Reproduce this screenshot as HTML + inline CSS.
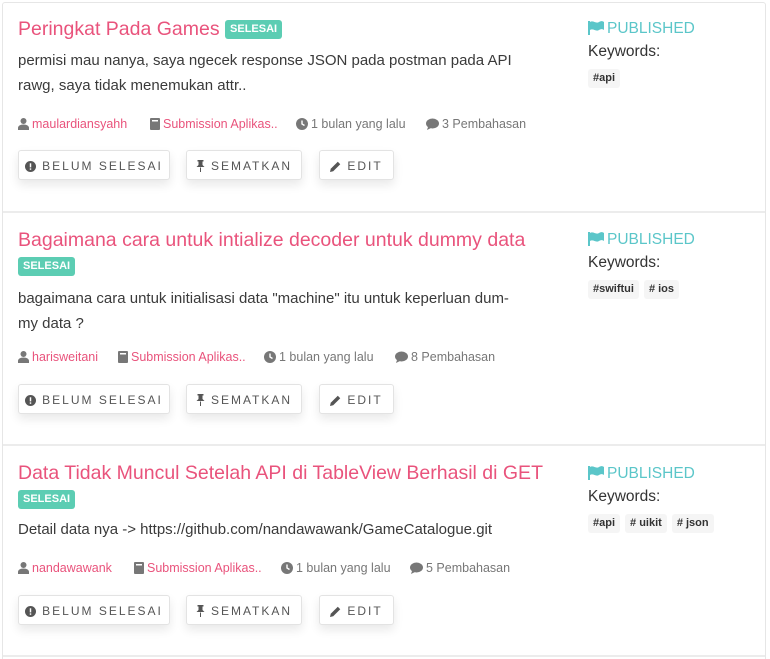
<!DOCTYPE html>
<html><head><meta charset="utf-8"><style>
html,body{margin:0;width:770px;height:659px;overflow:hidden}
body{background:#fff;font-family:"Liberation Sans",sans-serif;position:relative}
.frame{position:absolute;left:2px;top:2px;width:762px;height:657px;border:1px solid #e6e6e6;border-bottom:none;border-radius:3px 3px 0 0}
.sep{position:absolute;left:3px;width:762px;height:2px;background:#ececec}
.a{position:absolute;white-space:nowrap}
.t{font-size:19.5px;color:#e9537c;line-height:22px}
.badge{display:inline-block;background:#5ccdb3;color:#fff;font-weight:bold;font-size:11px;padding:3px 5px;border-radius:3px;line-height:13px;vertical-align:3px}
.d{font-size:15px;color:#3a3a3a;line-height:25px}
.m{font-size:12.5px;color:#777;line-height:14px}
.m span{position:absolute;white-space:nowrap}
.pk{color:#e9537c;font-weight:normal}
.ic{display:inline-block;vertical-align:-2px;margin-right:3px}
.btn{position:absolute;height:30px;border:1px solid #e3e3e3;border-radius:3px;box-shadow:0 5px 10px rgba(0,0,0,.09);font-size:12px;letter-spacing:2px;color:#555;line-height:30px;text-align:center;box-sizing:border-box;background:#fff}
.btn .ic{margin-right:6px}
.pub{font-size:15.5px;color:#5bc6c9}
.kw{font-size:15.5px;color:#333}
.tag{display:inline-block;background:#f5f5f5;font-size:11px;font-weight:bold;color:#333;padding:3px 5px;border-radius:3px;margin-right:5px;line-height:13px}
</style></head><body>
<div class="frame"></div>
<div class="sep" style="top:211px"></div>
<div class="sep" style="top:444px"></div>
<div class="sep" style="top:655px"></div>

<!-- card1 -->
<div class="a t" style="left:18px;top:18px">Peringkat Pada Games <span class="badge">SELESAI</span></div>
<div class="a d" style="left:18px;top:48px">permisi mau nanya, saya ngecek response JSON pada postman pada API<br>rawg, saya tidak menemukan attr..</div>
<div class="a m" style="left:0;top:117px;width:580px">
<span style="left:18px"><svg class="ic" width="11" height="12" viewBox="0 0 11 12"><circle cx="5.5" cy="3" r="3" fill="#777"/><path d="M0 12v-2c0-2 2-3.5 5.5-3.5S11 8 11 10v2z" fill="#777"/></svg><b class="pk">maulardiansyahh</b></span>
<span style="left:150px"><svg class="ic" width="10" height="12" viewBox="0 0 10 12"><rect width="10" height="12" rx="1" fill="#777"/><rect x="2" y="2" width="6" height="1.5" fill="#fff"/></svg><b class="pk">Submission Aplikas..</b></span>
<span style="left:296px"><svg class="ic" width="12" height="12" viewBox="0 0 12 12"><circle cx="6" cy="6" r="6" fill="#777"/><path d="M6 2.5V6l2.5 1.5" stroke="#fff" stroke-width="1.4" fill="none"/></svg>1 bulan yang lalu</span>
<span style="left:426px"><svg class="ic" width="13" height="12" viewBox="0 0 13 12"><ellipse cx="6.5" cy="5.5" rx="6.5" ry="5" fill="#777"/><path d="M2 9l-1 3 4-2z" fill="#777"/></svg>3 Pembahasan</span>
</div>
<div class="btn" style="left:18px;top:150px;width:152px"><svg class="ic" width="11" height="11" viewBox="0 0 12 12"><circle cx="6" cy="6" r="6" fill="#555"/><rect x="5.2" y="2.5" width="1.6" height="4.5" fill="#fff"/><rect x="5.2" y="8" width="1.6" height="1.6" fill="#fff"/></svg>BELUM SELESAI</div>
<div class="btn" style="left:186px;top:150px;width:116px"><svg class="ic" width="9" height="12" viewBox="0 0 9 12"><path d="M1.5 0h6v1.5H6.5v3.5l2 2H.5l2-2V1.5h-1zM4 7.5h1V12H4z" fill="#555"/></svg>SEMATKAN</div>
<div class="btn" style="left:319px;top:150px;width:75px"><svg class="ic" width="11" height="11" viewBox="0 0 12 12"><path d="M0 12l.8-3.5L8.5.8l2.7 2.7-7.7 7.7z" fill="#555"/></svg>EDIT</div>
<div class="a pub" style="left:588px;top:20px"><svg class="ic" width="16" height="14" viewBox="0 0 16 14"><path d="M0 0h2v14H0zM2 1c3-2 6 2 9 0s5 0 5 0v8s-2-2-5 0-6-2-9 0z" fill="#5bc6c9"/></svg>PUBLISHED</div>
<div class="a kw" style="left:588px;top:43px">Keywords:</div>
<div class="a" style="left:588px;top:68px"><span class="tag">#api</span></div>

<!-- card2 -->
<div class="a t" style="left:18px;top:229px">Bagaimana cara untuk intialize decoder untuk dummy data</div>
<div class="a" style="left:18px;top:257px"><span class="badge">SELESAI</span></div>
<div class="a d" style="left:18px;top:286px">bagaimana cara untuk initialisasi data "machine" itu untuk keperluan dum-<br>my data ?</div>
<div class="a m" style="left:0;top:350px;width:580px">
<span style="left:18px"><svg class="ic" width="11" height="12" viewBox="0 0 11 12"><circle cx="5.5" cy="3" r="3" fill="#777"/><path d="M0 12v-2c0-2 2-3.5 5.5-3.5S11 8 11 10v2z" fill="#777"/></svg><b class="pk">harisweitani</b></span>
<span style="left:118px"><svg class="ic" width="10" height="12" viewBox="0 0 10 12"><rect width="10" height="12" rx="1" fill="#777"/><rect x="2" y="2" width="6" height="1.5" fill="#fff"/></svg><b class="pk">Submission Aplikas..</b></span>
<span style="left:264px"><svg class="ic" width="12" height="12" viewBox="0 0 12 12"><circle cx="6" cy="6" r="6" fill="#777"/><path d="M6 2.5V6l2.5 1.5" stroke="#fff" stroke-width="1.4" fill="none"/></svg>1 bulan yang lalu</span>
<span style="left:395px"><svg class="ic" width="13" height="12" viewBox="0 0 13 12"><ellipse cx="6.5" cy="5.5" rx="6.5" ry="5" fill="#777"/><path d="M2 9l-1 3 4-2z" fill="#777"/></svg>8 Pembahasan</span>
</div>
<div class="btn" style="left:18px;top:384px;width:152px"><svg class="ic" width="11" height="11" viewBox="0 0 12 12"><circle cx="6" cy="6" r="6" fill="#555"/><rect x="5.2" y="2.5" width="1.6" height="4.5" fill="#fff"/><rect x="5.2" y="8" width="1.6" height="1.6" fill="#fff"/></svg>BELUM SELESAI</div>
<div class="btn" style="left:186px;top:384px;width:116px"><svg class="ic" width="9" height="12" viewBox="0 0 9 12"><path d="M1.5 0h6v1.5H6.5v3.5l2 2H.5l2-2V1.5h-1zM4 7.5h1V12H4z" fill="#555"/></svg>SEMATKAN</div>
<div class="btn" style="left:319px;top:384px;width:75px"><svg class="ic" width="11" height="11" viewBox="0 0 12 12"><path d="M0 12l.8-3.5L8.5.8l2.7 2.7-7.7 7.7z" fill="#555"/></svg>EDIT</div>
<div class="a pub" style="left:588px;top:231px"><svg class="ic" width="16" height="14" viewBox="0 0 16 14"><path d="M0 0h2v14H0zM2 1c3-2 6 2 9 0s5 0 5 0v8s-2-2-5 0-6-2-9 0z" fill="#5bc6c9"/></svg>PUBLISHED</div>
<div class="a kw" style="left:588px;top:254px">Keywords:</div>
<div class="a" style="left:588px;top:279px"><span class="tag">#swiftui</span><span class="tag"># ios</span></div>

<!-- card3 -->
<div class="a t" style="left:18px;top:462px">Data Tidak Muncul Setelah API di TableView Berhasil di GET</div>
<div class="a" style="left:18px;top:490px"><span class="badge">SELESAI</span></div>
<div class="a d" style="left:18px;top:517px">Detail data nya -&gt; https://github.com/nandawawank/GameCatalogue.git</div>
<div class="a m" style="left:0;top:561px;width:580px">
<span style="left:18px"><svg class="ic" width="11" height="12" viewBox="0 0 11 12"><circle cx="5.5" cy="3" r="3" fill="#777"/><path d="M0 12v-2c0-2 2-3.5 5.5-3.5S11 8 11 10v2z" fill="#777"/></svg><b class="pk">nandawawank</b></span>
<span style="left:134px"><svg class="ic" width="10" height="12" viewBox="0 0 10 12"><rect width="10" height="12" rx="1" fill="#777"/><rect x="2" y="2" width="6" height="1.5" fill="#fff"/></svg><b class="pk">Submission Aplikas..</b></span>
<span style="left:281px"><svg class="ic" width="12" height="12" viewBox="0 0 12 12"><circle cx="6" cy="6" r="6" fill="#777"/><path d="M6 2.5V6l2.5 1.5" stroke="#fff" stroke-width="1.4" fill="none"/></svg>1 bulan yang lalu</span>
<span style="left:410px"><svg class="ic" width="13" height="12" viewBox="0 0 13 12"><ellipse cx="6.5" cy="5.5" rx="6.5" ry="5" fill="#777"/><path d="M2 9l-1 3 4-2z" fill="#777"/></svg>5 Pembahasan</span>
</div>
<div class="btn" style="left:18px;top:595px;width:152px"><svg class="ic" width="11" height="11" viewBox="0 0 12 12"><circle cx="6" cy="6" r="6" fill="#555"/><rect x="5.2" y="2.5" width="1.6" height="4.5" fill="#fff"/><rect x="5.2" y="8" width="1.6" height="1.6" fill="#fff"/></svg>BELUM SELESAI</div>
<div class="btn" style="left:186px;top:595px;width:116px"><svg class="ic" width="9" height="12" viewBox="0 0 9 12"><path d="M1.5 0h6v1.5H6.5v3.5l2 2H.5l2-2V1.5h-1zM4 7.5h1V12H4z" fill="#555"/></svg>SEMATKAN</div>
<div class="btn" style="left:319px;top:595px;width:75px"><svg class="ic" width="11" height="11" viewBox="0 0 12 12"><path d="M0 12l.8-3.5L8.5.8l2.7 2.7-7.7 7.7z" fill="#555"/></svg>EDIT</div>
<div class="a pub" style="left:588px;top:465px"><svg class="ic" width="16" height="14" viewBox="0 0 16 14"><path d="M0 0h2v14H0zM2 1c3-2 6 2 9 0s5 0 5 0v8s-2-2-5 0-6-2-9 0z" fill="#5bc6c9"/></svg>PUBLISHED</div>
<div class="a kw" style="left:588px;top:488px">Keywords:</div>
<div class="a" style="left:588px;top:513px"><span class="tag">#api</span><span class="tag"># uikit</span><span class="tag"># json</span></div>
</body></html>
